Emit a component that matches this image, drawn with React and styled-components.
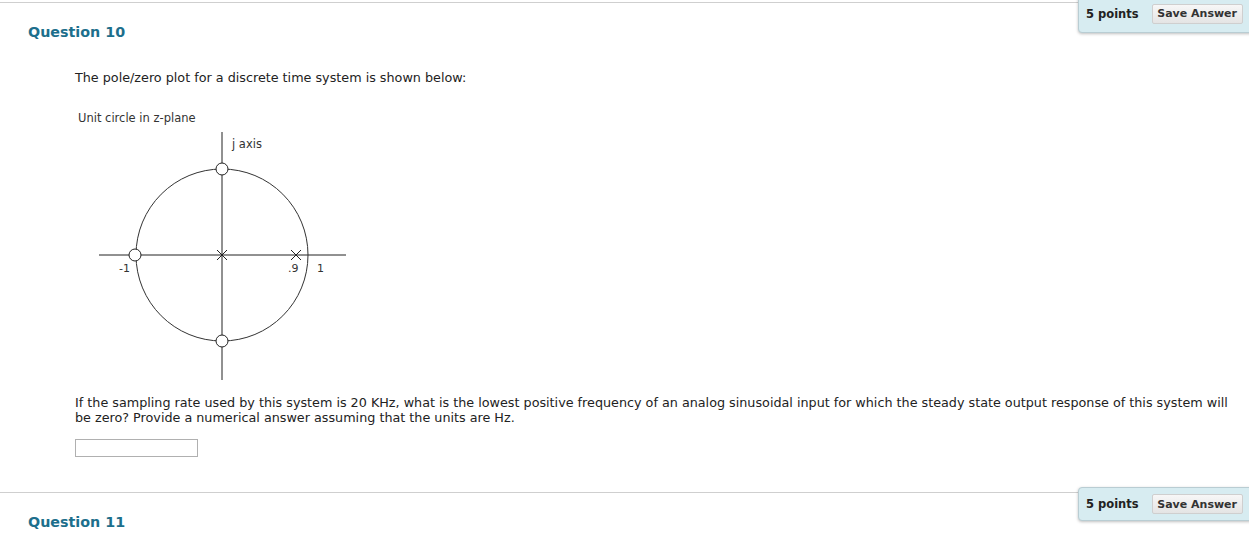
import React from 'react';
import styled, { createGlobalStyle } from 'styled-components';

const GlobalStyle = createGlobalStyle`
  html, body {
    margin: 0;
    padding: 0;
    background: #ffffff;
  }
  body {
    font-family: "DejaVu Sans", "Open Sans", sans-serif;
    color: #222222;
    overflow: hidden;
  }
`;

const Page = styled.div`
  width: 1249px;
  height: 537px;
  overflow: hidden;
  padding-top: 2px;
  box-sizing: border-box;
`;

const QuestionBlock = styled.div`
  position: relative;
  border-top: 1px solid #cfcfcf;
  height: ${props => props.height || 490}px;
  box-sizing: border-box;
`;

const Title = styled.h3`
  margin: 0;
  padding: 20px 0 0 28px;
  font-size: 14.3px;
  font-weight: bold;
  color: #1d6f8c;
  line-height: 18px;
`;

const PointsBox = styled.div`
  position: absolute;
  top: ${props => props.top}px;
  left: 1078px;
  right: -10px;
  height: ${props => props.h}px;
  display: flex;
  align-items: center;
  gap: 13px;
  padding: 0 0 0 7px;
  background: #d7ecf1;
  border: 1px solid #b9cdd3;
  border-radius: 4px;
  box-shadow: 0 1px 3px rgba(0, 0, 0, 0.25);
`;

const Points = styled.span`
  font-size: 11.5px;
  font-weight: bold;
  color: #222;
`;

const SaveButton = styled.button`
  font-family: inherit;
  font-size: 11px;
  font-weight: bold;
  color: #333;
  width: 91px;
  height: 20px;
  padding: 0;
  background: linear-gradient(#f7f7f7, #e4e4e4);
  border: 1px solid #cfcfcf;
  border-radius: 2px;
`;

const Body = styled.div`
  padding: 29px 10px 0 75px;
  font-size: 12.75px;
  line-height: 15px;
`;

const Text = styled.p`
  margin: 0;
`;

const Figure = styled.div`
  margin: 23px 0 0 0;
  height: 287px;
`;

const AnswerInput = styled.input`
  display: block;
  margin-top: 14px;
  width: 123px;
  height: 18px;
  box-sizing: border-box;
  border: 1px solid #b0b0b0;
  padding: 0 3px;
`;

const PoleZeroPlot = () => {
  const cx = 147;
  const cy = 147;
  const r = 86;
  const zero = (x, y) => (
    <circle cx={x} cy={y} r="6" fill="#fff" stroke="#222" strokeWidth="1" />
  );
  const pole = (x, y) => (
    <g stroke="#222" strokeWidth="1">
      <line x1={x - 5} y1={y - 5} x2={x + 5} y2={y + 5} />
      <line x1={x - 5} y1={y + 5} x2={x + 5} y2={y - 5} />
    </g>
  );
  return (
    <svg width="280" height="280" viewBox="0 0 280 280" fontFamily="DejaVu Sans, sans-serif">
      <text x="3" y="14" fontSize="11.5" fill="#333">Unit circle in z-plane</text>
      <text x="157" y="40" fontSize="11.5" fill="#333">j axis</text>
      <line x1="24" y1={cy} x2="271" y2={cy} stroke="#222" strokeWidth="1" />
      <line x1={cx} y1="24" x2={cx} y2="272" stroke="#222" strokeWidth="1" />
      <circle cx={cx} cy={cy} r={r} fill="none" stroke="#333" strokeWidth="1" />
      {zero(cx, cy - r)}
      {zero(cx, cy + r)}
      {zero(cx - r - 1, cy)}
      {pole(cx, cy)}
      {pole(cx + 74, cy)}
      <text x="44" y="164" fontSize="11" fill="#333">-1</text>
      <text x="213" y="164" fontSize="11" fill="#333">.9</text>
      <text x="242" y="164" fontSize="11" fill="#333">1</text>
    </svg>
  );
};

const App = () => (
  <>
    <GlobalStyle />
    <Page>
      <QuestionBlock height={490}>
        <PointsBox top={-9} h={37}>
          <Points>5 points</Points>
          <SaveButton>Save Answer</SaveButton>
        </PointsBox>
        <Title>Question 10</Title>
        <Body>
          <Text>The pole/zero plot for a discrete time system is shown below:</Text>
          <Figure>
            <PoleZeroPlot />
          </Figure>
          <Text>
            If the sampling rate used by this system is 20 KHz, what is the lowest positive frequency of an analog
            sinusoidal input for which the steady state output response of this system will be zero? Provide a
            numerical answer assuming that the units are Hz.
          </Text>
          <AnswerInput type="text" />
        </Body>
      </QuestionBlock>
      <QuestionBlock height={60}>
        <PointsBox top={-6} h={32}>
          <Points>5 points</Points>
          <SaveButton>Save Answer</SaveButton>
        </PointsBox>
        <Title>Question 11</Title>
      </QuestionBlock>
    </Page>
  </>
);

export default App;
